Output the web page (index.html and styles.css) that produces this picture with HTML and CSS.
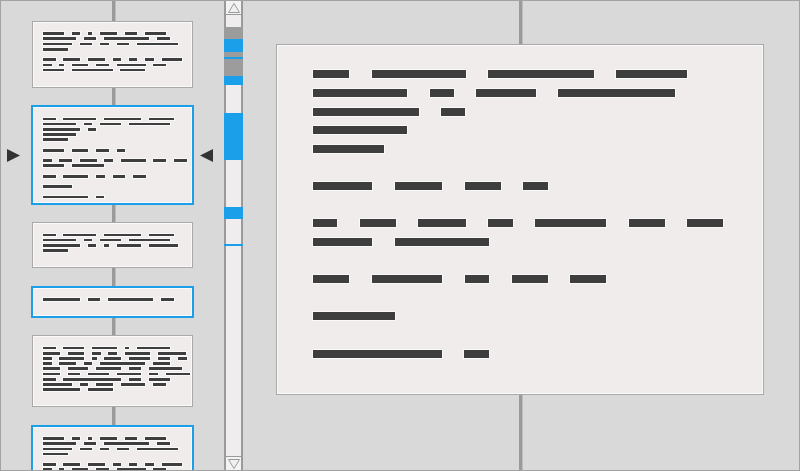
FILE: index.html
```html
<!DOCTYPE html>
<html lang="en">
<head>
    <meta charset="UTF-8">
    <meta name="viewport" content="width=device-width, initial-scale=1.0">
    <title>Outline</title>
    <link rel="stylesheet" href="styles.css">
</head>
<body>
    <div id="frame">
        <div id="pages">
            <div class="slot"><div class="thumb doc" data-doc="notes"></div></div>
            <div class="slot">
                <svg class="pointer left" viewBox="0 0 13 13"><polygon points="0,0 13,6.5 0,13"/></svg>
                <div class="thumb doc sel tight" data-doc="main"></div>
                <svg class="pointer right" viewBox="0 0 13 13"><polygon points="13,0 0,6.5 13,13"/></svg>
            </div>
            <div class="slot"><div class="thumb doc" data-doc="draft"></div></div>
            <div class="slot"><div class="thumb doc sel" data-doc="title"></div></div>
            <div class="slot"><div class="thumb doc" data-doc="body"></div></div>
            <div class="slot"><div class="thumb doc sel" data-doc="notes"></div></div>
        </div>

        <div id="minimap">
            <div class="mm-btn up">
                <svg viewBox="0 0 12 10"><polygon points="6,0.5 11.5,9.5 0.5,9.5"/></svg>
            </div>
            <div id="marks"></div>
            <div class="mm-track fill"></div>
            <div class="mm-btn down">
                <svg viewBox="0 0 12 10"><polygon points="0.5,0.5 11.5,0.5 6,9.5"/></svg>
            </div>
        </div>

        <div id="editor">
            <div class="sheet doc" data-doc="main"></div>
        </div>
    </div>

    <script>
        // word lengths per line, an empty line is a paragraph break
        const docs = {
            notes: [[5, 2, 1, 4, 3, 5], [8, 3, 11, 3], [7, 3, 2, 3, 10], [6], [],
                    [3, 4, 4, 2, 2, 2, 5], [2, 1, 4, 3, 7, 3], [5, 10, 6]],
            main: [[3, 8, 9, 6], [8, 2, 5, 10], [9, 2], [8], [6], [],
                   [5, 4, 3, 2], [],
                   [2, 3, 4, 2, 6, 3, 3], [5, 8], [],
                   [3, 6, 2, 3, 3], [],
                   [7], [],
                   [11, 2]],
            draft: [[3, 8, 9, 6], [8, 2, 5, 10], [9, 2, 1, 6, 7], [6]],
            title: [[9, 3, 11, 3]],
            body: [[3, 5, 6, 1, 8], [4, 4, 2, 2, 6, 7], [2, 6, 1, 4, 5, 3, 2],
                   [2, 4, 2, 11, 4], [4, 5, 6, 3, 8], [4, 3, 5, 6, 2, 6],
                   [3, 14, 3, 5], [7, 2, 4, 6, 3], [9, 6]]
        };

        // scrollbar overview: [kind, height]
        const marks = [
            ['track', 12], ['knob', 12], ['mark', 13], ['knob', 5], ['mark', 2],
            ['knob', 17], ['mark', 9], ['track', 28], ['mark', 47], ['track', 47],
            ['mark', 12], ['track', 25], ['mark', 2]
        ];

        document.querySelectorAll('[data-doc]').forEach(el => {
            docs[el.dataset.doc].forEach(words => {
                const line = document.createElement('div');
                line.className = 'ln';
                words.forEach(n => {
                    const word = document.createElement('i');
                    word.style.setProperty('--n', n);
                    line.appendChild(word);
                });
                el.appendChild(line);
            });
        });

        const marksBox = document.getElementById('marks');
        marks.forEach(([kind, h]) => {
            const seg = document.createElement('div');
            seg.className = 'mm-' + kind;
            seg.style.height = h + 'px';
            marksBox.appendChild(seg);
        });
    </script>
</body>
</html>
```

FILE: styles.css
```css
body {
    margin: 0;
    background: #d9d9d9;
    font-family: 'Liberation Sans', Arial, sans-serif;
}

#frame {
    display: flex;
    width: 800px;
    height: 471px;
    box-sizing: border-box;
    border: 1px solid #a2a2a2;
    background: #d9d9d9;
    overflow: hidden;
}

/* page strip on the left */
#pages {
    flex: none;
    width: 223px;
    display: flex;
    flex-direction: column;
    gap: 18.5px;
    padding-top: 20px;
    box-sizing: border-box;
    overflow: hidden;
    background: linear-gradient(to right,
        transparent 111px, #9a9a9a 111px, #9a9a9a 114px,
        #bdbdbd 114px, #bdbdbd 115px, transparent 115px);
}

.slot {
    flex: none;
    display: grid;
    grid-template-columns: 31px 161px 31px;
    align-items: center;
}

.thumb {
    grid-column: 2;
    box-sizing: border-box;
    border: 1px solid #a9a9a9;
    box-shadow: inset 0 0 0 1px #fafafa;
    background: #efeceb;
    padding: 9px 0 14px 10px;
}

.thumb.sel {
    border-color: #1c9fe9;
    box-shadow: 0 0 0 1px #1c9fe9, inset 0 0 0 1px #fafafa;
}

.thumb.tight {
    padding-bottom: 3px;
}

.pointer {
    width: 13px;
    height: 13px;
    fill: #333333;
}

.pointer.left {
    grid-column: 1;
    margin-left: 6px;
}

.pointer.right {
    grid-column: 3;
    margin-left: 7px;
}

/* greeked text */
.doc {
    --cw: 4.06px;
    --e: 0.42px;
    --gap: 7.88px;
    --lh: 5.22px;
    --bar: 2.7px;
}

.ln {
    display: flex;
    align-items: center;
    gap: var(--gap);
    height: var(--lh);
}

.ln i {
    flex: none;
    width: calc(var(--n) * var(--cw) + var(--e));
    height: var(--bar);
    background: #3e3e3e;
    box-shadow: 0 0 0 1px rgba(255, 255, 255, 0.7);
}

/* scrollbar with overview marks */
#minimap {
    flex: none;
    width: 19px;
    display: flex;
    flex-direction: column;
}

.mm-btn {
    height: 13px;
    background: #f4f3f3;
    border: solid #9a9a9a;
    border-width: 0 2px;
    display: flex;
    align-items: center;
    justify-content: center;
}

.mm-btn.up {
    border-bottom-width: 1px;
}

.mm-btn.down {
    border-top-width: 1px;
}

.mm-btn svg {
    width: 12px;
    height: 10px;
    fill: #f1f0f0;
    stroke: #9a9a9a;
    stroke-width: 1;
}

.mm-track {
    background: #efeded;
    border: solid #9a9a9a;
    border-width: 0 2px;
}

.mm-track.fill {
    flex: 1;
}

.mm-knob {
    background: #9c9c9c;
}

.mm-mark {
    background: #1c9fe9;
}

/* editor */
#editor {
    flex: 1;
    padding: 43px 0 0 33px;
    background: linear-gradient(to right,
        transparent 276px, #9a9a9a 276px, #9a9a9a 279px,
        #bdbdbd 279px, #bdbdbd 280px, transparent 280px);
}

.sheet {
    --cw: 11.6px;
    --e: 1.2px;
    --gap: 22.5px;
    --lh: 18.64px;
    --bar: 8px;
    width: 488px;
    box-sizing: border-box;
    border: 1px solid #a9a9a9;
    box-shadow: inset 0 0 0 1px #fbfbfb;
    background: #efeceb;
    padding: 20px 36px 31px;
}
```
